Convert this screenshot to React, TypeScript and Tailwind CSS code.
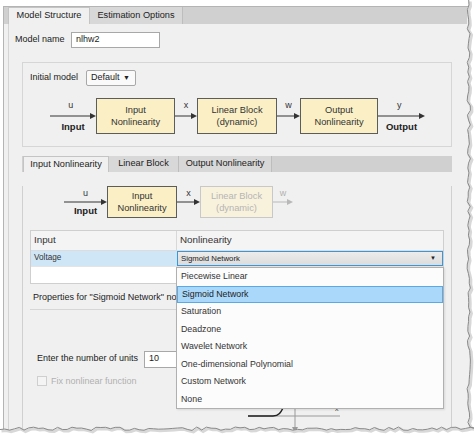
import React from 'react';

const Arrow = ({
  w,
  top,
  bottom,
  faded = false,
  topX = '50%',
}: {
  w: number;
  top?: string;
  bottom?: string;
  faded?: boolean;
  topX?: string;
}) => {
  const stroke = faded ? '#b8b8b8' : '#333';
  return (
    <div className="relative h-full shrink-0" style={{ width: w }}>
      <svg className="absolute left-0 top-1/2 -translate-y-1/2" width={w} height={7}>
        <line x1={0} y1={3.5} x2={w - 5} y2={3.5} stroke={stroke} strokeWidth={1} />
        <polygon points={`${w - 6},0.5 ${w},3.5 ${w - 6},6.5`} fill={stroke} />
      </svg>
      {top && (
        <span
          className={`absolute top-[2px] -translate-x-1/2 text-[9px] leading-[10px] ${faded ? 'text-[#b0b0b0]' : 'text-[#333]'}`}
          style={{ left: topX }}
        >
          {top}
        </span>
      )}
      {bottom && (
        <span className="absolute bottom-[2px] left-1/2 -translate-x-1/2 text-[9.5px] font-bold leading-[11px] text-[#222]">
          {bottom}
        </span>
      )}
    </div>
  );
};

const Block = ({ w, lines, faded = false }: { w: number; lines: string[]; faded?: boolean }) => (
  <div
    className={`flex h-full shrink-0 flex-col items-center justify-center border text-[9.3px] leading-[12px] ${
      faded ? 'border-[#c8c8c8] bg-[#f8f1dc] text-[#b5b5b5]' : 'border-[#5c5c5c] bg-[#fbefc5] text-[#333]'
    }`}
    style={{ width: w }}
  >
    {lines.map((l) => (
      <span key={l}>{l}</span>
    ))}
  </div>
);

const options = [
  'Piecewise Linear',
  'Sigmoid Network',
  'Saturation',
  'Deadzone',
  'Wavelet Network',
  'One-dimensional Polynomial',
  'Custom Network',
  'None',
];

function jag(seed: number, n: number) {
  const out: number[] = [];
  let s = seed;
  for (let i = 0; i < n; i++) {
    s = (s * 9301 + 49297) % 233280;
    out.push(s / 233280);
  }
  return out;
}

const TornEdge = () => {
  const rj = jag(7, 90);
  const bj = jag(13, 100);
  const right: string[] = [];
  for (let i = 0; i < 90; i++) {
    right.push(`${467 + rj[i] * 3.5},${i * 4.8}`);
  }
  const bottom: string[] = [];
  for (let i = 99; i >= 0; i--) {
    bottom.push(`${i * 4.8},${427 + bj[i] * 3.5}`);
  }
  const edge = [...right, ...bottom].join(' ');
  return (
    <svg className="pointer-events-none absolute left-0 top-0" width={474} height={434}>
      <polygon points={`474,0 ${edge} 0,434 474,434`} fill="#ffffff" />
      <polyline points={edge} fill="none" stroke="#d8d8d8" strokeWidth={3} transform="translate(1.5,1.5)" />
      <polyline points={edge} fill="none" stroke="#8a8a8a" strokeWidth={1} />
    </svg>
  );
};

export default function App() {
  return (
    <div className="relative h-[434px] w-[474px] overflow-hidden whitespace-nowrap bg-white pl-[3px] pt-[6px] font-['Liberation_Sans',Arial,sans-serif] text-[9px] text-[#222]">
      <div className="h-[440px] w-[480px] border-l border-t border-[#b4b4b4] bg-[#f0f0f0]">
        {/* main tabs */}
        <div className="flex h-[17px] w-[463px] bg-[#d0d0d0] pl-[4px] text-[9.2px]">
          <div className="flex w-[82px] items-center justify-center border border-b-0 border-[#c4c4c4] bg-[#f0f0f0] text-[#222]">
            Model Structure
          </div>
          <div className="flex w-[93px] items-center justify-center border-r border-[#bdbdbd] bg-[#d8d8d8] text-[#222]">
            Estimation Options
          </div>
        </div>

        <div className="ml-[4px] h-[420px] w-[459px] border-l border-[#d4d4d4]">
          <div className="flex h-[24px] items-end pl-[6px]">
            <span className="flex h-[16px] w-[56px] items-center">Model name</span>
            <div className="flex h-[16px] w-[89px] items-center border border-[#a8a8a8] bg-white pl-[4px]">nlhw2</div>
          </div>

          {/* initial model panel */}
          <div className="ml-[13px] mt-[14px] h-[85px] w-[430px] border border-[#d6d6d6]">
            <div className="flex items-center pl-[7px] pt-[7px]">
              <span className="w-[56px]">Initial model</span>
              <div className="flex h-[16px] w-[50px] items-center justify-between rounded-[2px] border border-[#a8a8a8] bg-[#fafafa] pl-[4px] pr-[5px]">
                <span>Default</span>
                <span className="text-[7px]">▼</span>
              </div>
            </div>
            <div className="mt-[12px] flex h-[36px] pl-[27px]">
              <Arrow w={46} top="u" bottom="Input" topX="45%" />
              <Block w={79} lines={['Input', 'Nonlinearity']} />
              <Arrow w={22} top="x" />
              <Block w={80} lines={['Linear Block', '(dynamic)']} />
              <Arrow w={23} top="w" />
              <Block w={78} lines={['Output', 'Nonlinearity']} />
              <Arrow w={47} top="y" bottom="Output" topX="45%" />
            </div>
          </div>

          {/* lower tab group */}
          <div className="ml-[13px] mt-[9px] w-[430px]">
            <div className="flex h-[16px] bg-[#d0d0d0] pl-[1px] text-[9.2px]">
              <div className="flex w-[86px] items-center justify-center border border-b-0 border-[#c4c4c4] bg-[#f0f0f0]">
                Input Nonlinearity
              </div>
              <div className="flex w-[70px] items-center justify-center border-r border-[#bdbdbd] bg-[#d8d8d8]">
                Linear Block
              </div>
              <div className="flex w-[93px] items-center justify-center border-r border-[#bdbdbd] bg-[#d8d8d8]">
                Output Nonlinearity
              </div>
            </div>

            <div className="h-[260px] border-l border-r border-[#d0d0d0]">
              <div className="mt-[14px] flex h-[32px] pl-[41px]">
                <Arrow w={43} top="u" bottom="Input" />
                <Block w={70} lines={['Input', 'Nonlinearity']} />
                <Arrow w={23} top="x" />
                <Block w={73} lines={['Linear Block', '(dynamic)']} faded />
                <Arrow w={20} top="w" faded />
              </div>

              {/* table */}
              <div className="relative ml-[7px] mt-[12px] w-[414px] border border-[#cfcfcf] bg-white">
                <div className="flex h-[19px] bg-[#f4f4f4] text-[9.8px] text-[#333]">
                  <div className="flex w-[146px] items-center border-r border-[#d8d8d8] pl-[3px]">Input</div>
                  <div className="flex flex-1 items-center pl-[3px]">Nonlinearity</div>
                </div>
                <div className="flex h-[16px] border-t border-[#dcdcdc]">
                  <div className="flex w-[146px] items-center bg-[#cfe6f7] pl-[3px] text-[8.2px] text-[#333]">Voltage</div>
                  <div className="flex flex-1 items-center justify-between border border-[#3d96d8] bg-gradient-to-b from-[#ececec] to-[#dcdcdc] pl-[3px] pr-[6px] text-[7.8px] text-[#222]">
                    <span>Sigmoid Network</span>
                    <span className="text-[6px]">▼</span>
                  </div>
                </div>
                <div className="flex h-[17px] border-t border-[#e4e4e4]">
                  <div className="w-[146px] border-r border-[#e4e4e4]" />
                </div>

                {/* open dropdown list */}
                <div className="absolute left-[145px] top-[36px] z-10 w-[268px] border border-[#b0b0b0] bg-[#fcfcfc] shadow-[1px_1px_2px_rgba(0,0,0,0.1)]">
                  {options.map((o) => (
                    <div
                      key={o}
                      className={`flex h-[17.5px] items-center pl-[4px] text-[8.8px] ${
                        o === 'Sigmoid Network' ? 'border border-[#5aa9e6] bg-[#a9d8fb] text-[#222]' : 'text-[#333]'
                      }`}
                    >
                      {o}
                    </div>
                  ))}
                </div>
              </div>

              <div className="ml-[7px] mt-[7px] w-[414px] border-b border-[#d6d6d6] pb-[4px] pl-[3px] text-[#222]">
                Properties for "Sigmoid Network" nonlinearity
              </div>

              <div className="ml-[14px] mt-[41px] flex items-center">
                <span className="w-[107px]">Enter the number of units</span>
                <div className="flex h-[17px] w-[80px] items-center border border-[#a8a8a8] bg-white pl-[4px]">10</div>
              </div>

              <div className="ml-[14px] mt-[7px] flex items-center gap-[4px] text-[#b0b0b0]">
                <div className="h-[10px] w-[10px] border border-[#cfcfcf] bg-[#f4f4f4]" />
                <span>Fix nonlinear function</span>
              </div>

              {/* nonlinearity plot */}
              <svg className="ml-[222px] mt-[18px] block" width={110} height={28}>
                <line x1={3} y1={10} x2={95} y2={10} stroke="#9a9a9a" strokeWidth={1} />
                <line x1={50} y1={0} x2={50} y2={24} stroke="#9a9a9a" strokeWidth={1} />
                <polygon points="47,21 50,27 53,21" fill="#9a9a9a" />
                <path d="M3 10 L28 10 C34 10 36 6 38 2" stroke="#222" strokeWidth={1.5} fill="none" />
                <text x={90} y={5} fontSize={7} fill="#333" fontFamily="Liberation Sans">x</text>
              </svg>
            </div>
          </div>
        </div>
      </div>
      <TornEdge />
    </div>
  );
}
